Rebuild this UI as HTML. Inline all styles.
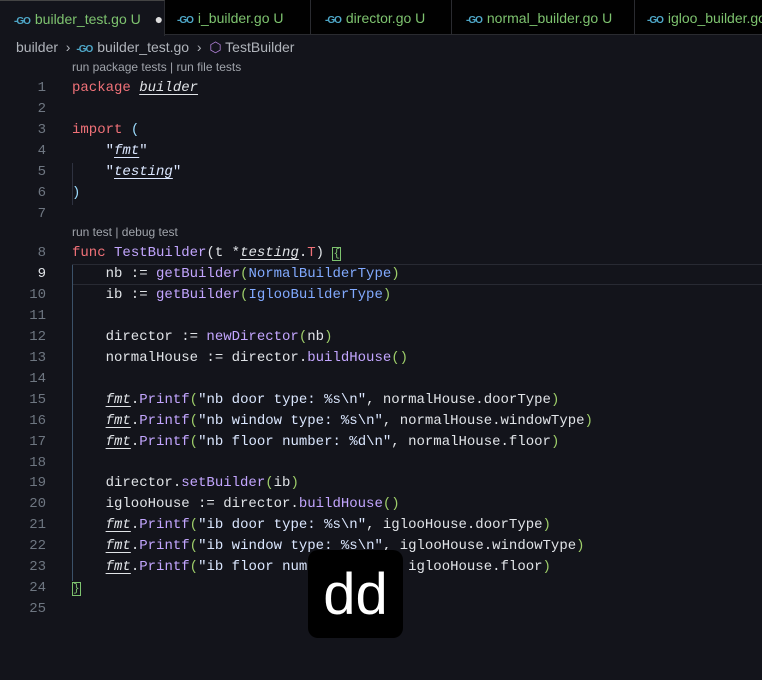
<!DOCTYPE html>
<html><head><meta charset="utf-8"><style>
*{margin:0;padding:0;box-sizing:border-box}
body{width:762px;height:680px;background:#13141b;overflow:hidden;position:relative;font-family:"Liberation Sans",sans-serif;color:#e1e4e8}
.tabs{position:absolute;top:0;left:0;width:762px;height:35px;background:#010101;border-bottom:1px solid #2a2b30}
.tab{position:absolute;top:0;height:35px;border-right:1px solid #2a2b30;font-size:14px;line-height:36px;color:#7ec36f;white-space:nowrap}
.tab.active{background:#13141b;height:36px;border-top:1px solid #444}
.go{color:#4fa8c9;font-size:10px;font-weight:bold;margin-right:5px;letter-spacing:-1px}
.bc{position:absolute;top:38px;left:16px;font-size:14px;color:#b0b4bb;line-height:18px;white-space:nowrap}
.lens{position:absolute;left:72px;font-size:12px;color:#a0a4ab}
.ln{position:absolute;width:46px;text-align:right;color:#6e7681;font-family:"Liberation Mono",monospace;font-size:14px}
.l{position:absolute;left:72px;white-space:pre;font-family:"Liberation Mono",monospace;font-size:14px;color:#e1e4e8}
.k{color:#f07178}.f{color:#c3a6ff}.c{color:#82aaff}.s{color:#dbe7ff}.i{font-style:italic;text-decoration:underline;text-underline-offset:3px}
.p{color:#9ece6a}.b{color:#9cdcfe}
.guide{position:absolute;left:72px;width:1px;background:#2e3240}
</style></head><body>
<div class="tabs">
<div class="tab active" style="left:0;width:165px;padding-left:14px"><span class="go">-GO</span>builder_test.go U <span style="color:#ddd;margin-left:10px">●</span></div>
<div class="tab" style="left:165px;width:146px;padding-left:12px"><span class="go">-GO</span>i_builder.go U</div>
<div class="tab" style="left:311px;width:141px;padding-left:14px"><span class="go">-GO</span>director.go U</div>
<div class="tab" style="left:452px;width:183px;padding-left:14px"><span class="go">-GO</span>normal_builder.go U</div>
<div class="tab" style="left:635px;width:140px;padding-left:12px;border-right:none"><span class="go">-GO</span>igloo_builder.go</div>
</div>
<div class="bc">builder &nbsp;›&nbsp;<span class="go" style="margin-left:2px">-GO</span>builder_test.go &nbsp;›&nbsp; <span style="color:#b180d7">⬡</span> TestBuilder</div>
<div class="lens" style="top:60px">run package tests | run file tests</div>
<div class="lens" style="top:225px">run test | debug test</div>
<div style="position:absolute;left:72px;right:0;top:264px;height:21px;border-top:1px solid #282a33;border-bottom:1px solid #282a33"></div>
<div class="guide" style="top:163px;height:42px"></div>
<div class="guide" style="top:265px;height:316px;background:#3b5168"></div>
<div id="c"></div>
<div style="position:absolute;left:308px;top:550px;width:95px;height:88px;background:#000;border-radius:10px;color:#fff;font-size:58px;text-align:center;line-height:90px">dd</div>
<script>
const L=[
[1,'<span class="k">package</span> <span class="i">builder</span>'],
[2,''],
[3,'<span class="k">import</span> <span class="b">(</span>'],
[4,'    <span class="s">"<span class="i">fmt</span>"</span>'],
[5,'    <span class="s">"<span class="i">testing</span>"</span>'],
[6,'<span class="b">)</span>'],
[7,''],
[8,'<span class="k">func</span> <span class="f">TestBuilder</span>(t *<span class="i">testing</span>.<span class="k">T</span>) <span style="color:#7ec36f;border:1px solid #7ec36f;font-size:11px">{</span>'],
[9,'    nb := <span class="f">getBuilder</span><span class="p">(</span><span class="c">NormalBuilderType</span><span class="p">)</span>'],
[10,'    ib := <span class="f">getBuilder</span><span class="p">(</span><span class="c">IglooBuilderType</span><span class="p">)</span>'],
[11,''],
[12,'    director := <span class="f">newDirector</span><span class="p">(</span>nb<span class="p">)</span>'],
[13,'    normalHouse := director.<span class="f">buildHouse</span><span class="p">()</span>'],
[14,''],
[15,'    <span class="i">fmt</span>.<span class="f">Printf</span><span class="p">(</span><span class="s">"nb door type: %s\\n"</span>, normalHouse.doorType<span class="p">)</span>'],
[16,'    <span class="i">fmt</span>.<span class="f">Printf</span><span class="p">(</span><span class="s">"nb window type: %s\\n"</span>, normalHouse.windowType<span class="p">)</span>'],
[17,'    <span class="i">fmt</span>.<span class="f">Printf</span><span class="p">(</span><span class="s">"nb floor number: %d\\n"</span>, normalHouse.floor<span class="p">)</span>'],
[18,''],
[19,'    director.<span class="f">setBuilder</span><span class="p">(</span>ib<span class="p">)</span>'],
[20,'    iglooHouse := director.<span class="f">buildHouse</span><span class="p">()</span>'],
[21,'    <span class="i">fmt</span>.<span class="f">Printf</span><span class="p">(</span><span class="s">"ib door type: %s\\n"</span>, iglooHouse.doorType<span class="p">)</span>'],
[22,'    <span class="i">fmt</span>.<span class="f">Printf</span><span class="p">(</span><span class="s">"ib window type: %s\\n"</span>, iglooHouse.windowType<span class="p">)</span>'],
[23,'    <span class="i">fmt</span>.<span class="f">Printf</span><span class="p">(</span><span class="s">"ib floor number: %d\\n"</span>, iglooHouse.floor<span class="p">)</span>'],
[24,'<span style="color:#7ec36f;border:1px solid #7ec36f;font-size:11px">}</span>'],
[25,'']];
let h='';
for(const [n,t] of L){
 let y=n<8?80+(n-1)*21:245+(n-8)*20.95;
 h+=`<div class="ln" style="top:${y}px;${n==9?'color:#e1e4e8':''}">${n}</div><div class="l" style="top:${y}px">${t}</div>`;
}
document.getElementById('c').innerHTML=h;
</script>
</body></html>
